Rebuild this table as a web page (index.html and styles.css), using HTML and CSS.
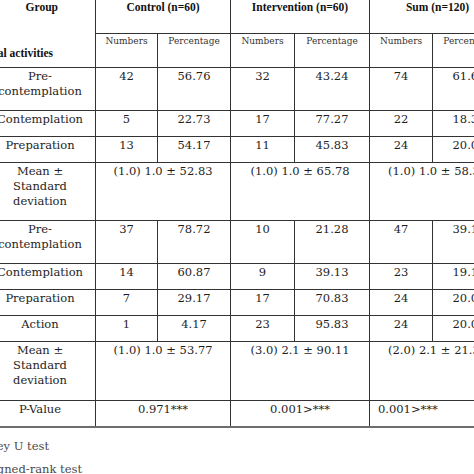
FILE: index.html
```html
<!DOCTYPE html>
<html>
<head>
<meta charset="utf-8">
<link rel="stylesheet" href="styles.css">
</head>
<body>
<div class="page">
<table class="tbl">
  <colgroup>
    <col class="c-stage"><col class="c-n1"><col class="c-p1"><col class="c-n2"><col class="c-p2"><col class="c-n3"><col class="c-p3">
  </colgroup>
  <tr class="h-top">
    <td class="corner" rowspan="2">
      <div class="grp"><span>Group</span></div>
      <div class="act"><span>Physical activities</span></div>
    </td>
    <td class="grp-head" colspan="2">Control (n=60)</td>
    <td class="grp-head" colspan="2">Intervention (n=60)</td>
    <td class="grp-head" colspan="2">Sum (n=120)</td>
  </tr>
  <tr class="h-sub">
    <td class="sub">Numbers</td><td class="sub">Percentage</td>
    <td class="sub">Numbers</td><td class="sub">Percentage</td>
    <td class="sub">Numbers</td><td class="sub">Percentage</td>
  </tr>

  <tr class="r2"><td>Pre-<br>contemplation</td><td>42</td><td>56.76</td><td>32</td><td>43.24</td><td>74</td><td>61.67</td></tr>
  <tr class="r1"><td>Contemplation</td><td>5</td><td>22.73</td><td>17</td><td>77.27</td><td>22</td><td>18.33</td></tr>
  <tr class="r1"><td>Preparation</td><td>13</td><td>54.17</td><td>11</td><td>45.83</td><td>24</td><td>20.00</td></tr>
  <tr class="r3"><td>Mean ±<br>Standard<br>deviation</td><td colspan="2">(1.0) 1.0 ± 52.83</td><td colspan="2">(1.0) 1.0 ± 65.78</td><td colspan="2">(1.0) 1.0 ± 58.31</td></tr>

  <tr class="r2"><td>Pre-<br>contemplation</td><td>37</td><td>78.72</td><td>10</td><td>21.28</td><td>47</td><td>39.17</td></tr>
  <tr class="r1"><td>Contemplation</td><td>14</td><td>60.87</td><td>9</td><td>39.13</td><td>23</td><td>19.17</td></tr>
  <tr class="r1"><td>Preparation</td><td>7</td><td>29.17</td><td>17</td><td>70.83</td><td>24</td><td>20.00</td></tr>
  <tr class="r1"><td>Action</td><td>1</td><td>4.17</td><td>23</td><td>95.83</td><td>24</td><td>20.00</td></tr>
  <tr class="r3b"><td>Mean ±<br>Standard<br>deviation</td><td colspan="2">(1.0) 1.0 ± 53.77</td><td colspan="2">(3.0) 2.1 ± 90.11</td><td colspan="2">(2.0) 2.1 ± 21.36</td></tr>
  <tr class="r1 last"><td>P-Value</td><td colspan="2">0.971***</td><td colspan="2">0.001&gt;***</td><td colspan="2" class="pv-sum">0.001&gt;***</td></tr>
</table>

<div class="notes">
  <div class="note n1"><span>*Mann-Whitney U test</span></div>
  <div class="note n2"><span>**Wilcoxon signed-rank test</span></div>
</div>
</div>
</body>
</html>
```

FILE: styles.css
```css
html, body {
  margin: 0;
  padding: 0;
  overflow: hidden;
  background: #ffffff;
}

.page {
  width: 474px;
  height: 474px;
  overflow: hidden;
}

.tbl {
  border-collapse: collapse;
  table-layout: fixed;
  width: 521px;
  margin-left: -16px;
  margin-top: -2px;
  font-family: "DejaVu Serif", serif;
  font-size: 11.5px;
  line-height: 15px;
  color: #1e1e1e;
}

.c-stage { width: 111px; }
.c-n1 { width: 62px; }
.c-p1 { width: 73px; }
.c-n2 { width: 64px; }
.c-p2 { width: 75px; }
.c-n3 { width: 63px; }
.c-p3 { width: 73px; }

.tbl td {
  border: 1px solid #333333;
  text-align: center;
  vertical-align: top;
  padding: 1px 0 0 0;
  white-space: nowrap;
  overflow: visible;
}

.h-top { height: 35px; }
.h-sub { height: 34px; }
.r1 { height: 26px; }
.r2 { height: 43px; }
.r3 { height: 58px; }
.r3b { height: 59px; }

.tbl tr.last td {
  border-bottom: 2px solid #6e6e6e;
}

.corner {
  font-family: "Liberation Serif", serif;
  font-weight: bold;
  font-size: 11.5px;
  color: #111111;
}

.grp,
.act {
  display: flex;
  justify-content: flex-end;
  white-space: nowrap;
}

.grp {
  padding-right: 37px;
}

.act {
  padding-right: 42px;
  margin-top: 31px;
}

.grp-head {
  font-family: "Liberation Serif", serif;
  font-weight: bold;
  font-size: 11.5px;
  color: #111111;
}

.sub {
  font-size: 9px;
  color: #333333;
  padding-top: 0 !important;
}

.pv-sum {
  text-align: left !important;
  padding-left: 8px !important;
}

.notes {
  margin-top: 11px;
  display: flex;
  flex-direction: column;
  gap: 8px;
  font-family: "DejaVu Serif", serif;
  font-size: 11.5px;
  line-height: 15px;
  color: #4a4a4a;
}

.note {
  display: flex;
  justify-content: flex-end;
  white-space: nowrap;
}

.n1 { width: 49px; }
.n2 { width: 82px; }
```
